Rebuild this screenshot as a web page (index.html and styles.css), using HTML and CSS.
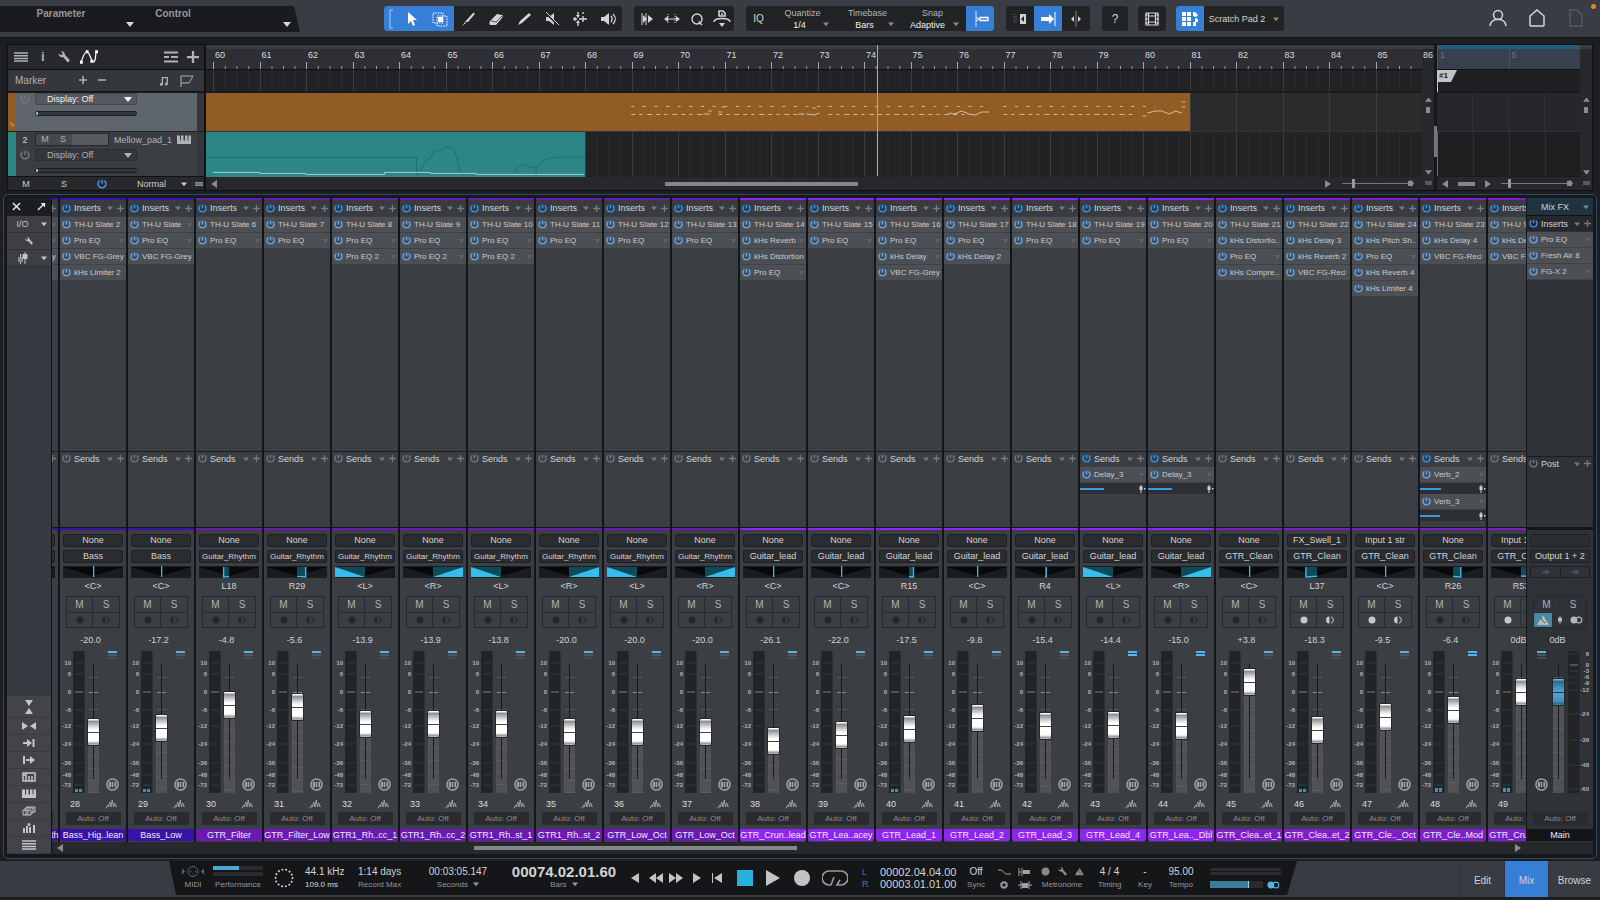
FILE: index.html
```html
<!DOCTYPE html>
<html lang="en">
<head>
    <meta charset="UTF-8">
    <title>Mixer</title>
    <link rel="stylesheet" href="styles.css">
</head>
<body>
    <!-- Icon set -->
    <svg class="sprite" aria-hidden="true">
        <symbol id="power" viewBox="0 0 10 10"><path d="M2.6 1.6a4 4 0 1 0 4.8 0M5 .8v4" fill="none" stroke="currentColor" stroke-width="1.5"/></symbol>
        <symbol id="down" viewBox="0 0 8 8"><path d="M0 2h8L4 7z" fill="currentColor"/></symbol>
        <symbol id="up" viewBox="0 0 8 8"><path d="M0 6h8L4 1z" fill="currentColor"/></symbol>
        <symbol id="left" viewBox="0 0 8 8"><path d="M7 0v8L1 4z" fill="currentColor"/></symbol>
        <symbol id="right" viewBox="0 0 8 8"><path d="M1 0v8l6-4z" fill="currentColor"/></symbol>
        <symbol id="plus" viewBox="0 0 8 8"><path d="M4 0v8M0 4h8" stroke="currentColor" stroke-width="1.5"/></symbol>
        <symbol id="minus" viewBox="0 0 8 8"><path d="M0 4h8" stroke="currentColor" stroke-width="1.5"/></symbol>
        <symbol id="lines" viewBox="0 0 14 10"><path d="M0 1h14M0 3.7h14M0 6.4h14M0 9.1h14" stroke="currentColor" stroke-width="1.5"/></symbol>
        <symbol id="wrench" viewBox="0 0 12 12"><path d="M.5 2.5 2.8 4l1.4-.3L4.5 2 3 .4c2-.7 4 .7 3.7 3L12 9.2 9.8 11.5 5 6C3 7 .5 5 .5 2.5z" fill="currentColor"/></symbol>
        <symbol id="bars" viewBox="0 0 14 6"><path d="M0 1h14M0 5h14" stroke="currentColor" stroke-width="2"/></symbol>
        <symbol id="keys" viewBox="0 0 14 9"><path d="M0 0v8.5h14V0h-2.5v5h-1V0H8v5H6.500V0H4v5H3V0z" fill="currentColor"/></symbol>
        <symbol id="plug" viewBox="0 0 14 14"><circle cx="7" cy="7" r="6" fill="none" stroke="currentColor" stroke-width="1.6"/><path d="M3 4h2.500v6H3zM6.200 4h1.600v6H6.200zM9 4h2v6H9z" fill="currentColor"/></symbol>
        <symbol id="wave" viewBox="0 0 12 10"><path d="M0 9h1l1-3 1 2 1.200-5 1.300 5 1.200-7 1.300 7 1.200-4L10.500 8l.7-1" fill="none" stroke="currentColor"/></symbol>
        <symbol id="rec" viewBox="0 0 8 8"><circle cx="4" cy="4" r="3.500" fill="currentColor"/></symbol>
        <symbol id="monitor" viewBox="0 0 8 8"><path d="M3.500.5a3.500 3.500 0 0 0 0 7z" fill="currentColor"/><path d="M5 .7a3.500 3.500 0 0 1 0 6.600" fill="none" stroke="currentColor"/></symbol>
        <symbol id="fader" viewBox="0 0 8 10"><path d="M4 0v10" stroke="currentColor"/><path d="M1.500 2h5v5h-5z" fill="currentColor"/></symbol>
        <symbol id="fader-pair" viewBox="0 0 12 12"><path d="M3.500 2v10M8 0v12" stroke="currentColor"/><path d="M1 5h5v5H1z" fill="#8a8b8e"/><path d="M5.500 2h5v5h-5z" fill="currentColor"/></symbol>
        <symbol id="send" viewBox="0 0 8 8"><path d="M3 0v8" stroke="currentColor"/><path d="M1.500 1.500h3v3.500h-3zM6 3h1.500v1.500H6z" fill="currentColor"/></symbol>
        <symbol id="link" viewBox="0 0 14 8"><circle cx="4.200" cy="4" r="3.700" fill="currentColor"/><circle cx="9.500" cy="4" r="3.200" fill="none" stroke="currentColor" stroke-width="1.300"/></symbol>
        <symbol id="metro" viewBox="0 0 12 10"><path d="M0 10 3 4l1 1 2-5 6 10z" fill="currentColor"/><path d="m3 3 5 5" stroke="#2b5b74"/></symbol>
        <symbol id="curve" viewBox="0 0 20 14"><path d="M2 12C4 10 4 3 8 2s4 11 8 10c2-2 1-6 2-10" fill="none" stroke="currentColor" stroke-width="1.300"/><path d="M1 11h3v3H1zM7 0h3v3H7zM12 10h3v3h-3zM17 0h3v3h-3z" fill="currentColor"/></symbol>
    </svg>

    <header class="topbar">
        <div class="params">
            <button>Parameter<svg><use href="#down"/></svg></button>
            <button>Control<svg><use href="#down"/></svg></button>
        </div>
        <div class="toolbar">
            <div class="group">
                <span class="bracket on"><svg viewBox="0 0 6 20"><path d="M5 1H2v18h3" fill="none" stroke="#a9cdf5"/></svg></span>
                <button class="on" aria-label="Arrow"><svg viewBox="0 0 18 18"><path d="M5 2v12l3-3 2 5 2-1-2-5h4z" fill="#fff"/></svg></button>
                <button class="on" aria-label="Range"><svg viewBox="0 0 18 18"><path d="M2 3h10v10H2zM6 6h10v10H6z" fill="none" stroke="#fff" stroke-dasharray="1.500 1"/><path d="M7 7h5v5H7z" fill="#fff"/></svg></button>
                <button aria-label="Split"><svg viewBox="0 0 18 18"><path d="M14 3c2-1 2 1 1 2L9 12l-3 0zM6 12l-3 4 4-3z" fill="currentColor"/></svg></button>
                <button aria-label="Eraser"><svg viewBox="0 0 18 18"><path d="m3 11 7-7 5 1c1 0 1 1 0 3l-6 7H4c-2 0-2-2-1-4z" fill="currentColor"/><path d="m4 11 5 1 6-6" fill="none" stroke="#555"/></svg></button>
                <button aria-label="Paint"><svg viewBox="0 0 18 18"><path d="m3 15 2-4 9-8 2 2-9 8z" fill="currentColor"/></svg></button>
                <button aria-label="Mute"><svg viewBox="0 0 18 18"><path d="M3 7h3l5-4v12l-5-4H3z" fill="currentColor"/><path d="m3 3 12 12" stroke="#222" stroke-width="2"/><path d="m3 2 13 13" stroke="currentColor"/></svg></button>
                <button aria-label="Bend"><svg viewBox="0 0 18 18"><path d="M7 2v5M7 11v5M2 9h4M8 9h8M4 7v4M12 6v6M12 4V2" stroke="currentColor" stroke-width="1.400"/><path d="m5 5 2 3 2-3zM5 13l2-3 2 3z" fill="currentColor"/></svg></button>
                <button aria-label="Listen"><svg viewBox="0 0 18 18"><path d="M2 7h3l5-4v12l-5-4H2z" fill="currentColor"/><path d="M12 6c1.500 2 1.500 4 0 6M14 4c3 3 3 7 0 10" fill="none" stroke="currentColor" stroke-width="1.300"/></svg></button>
            </div>
            <div class="group narrow">
                <button aria-label="Snap to start"><svg viewBox="0 0 18 18"><path d="M4 3v12M8 3v12" stroke="currentColor"/><path d="m5 5 4 4-4 4zM10 5l5 4-5 4z" fill="currentColor"/></svg></button>
                <button aria-label="Stretch"><svg viewBox="0 0 18 18"><path d="M5 4v10M12 4v10" stroke="currentColor" stroke-dasharray="1 1"/><path d="M3 9h12" stroke="currentColor"/><path d="M5 6 1 9l4 3zM13 6l4 3-4 3z" fill="currentColor"/></svg></button>
                <button aria-label="Quantize"><svg viewBox="0 0 18 18"><circle cx="9" cy="9" r="5" fill="none" stroke="currentColor" stroke-width="1.400"/><path d="m10.500 11.500 3.500 3.500" stroke="currentColor" stroke-width="1.400"/></svg></button>
                <button aria-label="Scroll"><svg viewBox="0 0 18 18"><path d="M6 1h4l2 2v3H6zM8 4h2M1 12c0-3 4-3.500 8-3.500s8 .5 8 3.500" fill="none" stroke="currentColor" stroke-width="1.600"/><path d="M6 13h6l-3 4z" fill="currentColor"/></svg></button>
            </div>
            <div class="group">
                <button class="iq">IQ</button>
                <button class="field">Quantize<b>1/4</b><svg><use href="#down"/></svg></button>
                <button class="field">Timebase<b>Bars</b><svg><use href="#down"/></svg></button>
                <button class="field">Snap<b>Adaptive</b><svg><use href="#down"/></svg></button>
                <button class="on" aria-label="Snap"><svg viewBox="0 0 18 18"><path d="M5 1v16" stroke="#d6e6fa"/><path d="M5 7l3 2-3 2" fill="none" stroke="#fff"/><path d="M9 7.500h8v3H9z" fill="none" stroke="#fff" stroke-width="1.300"/></svg></button>
            </div>
            <div class="group">
                <button aria-label="Follow editor"><svg viewBox="0 0 18 18"><path d="M3 4v10M5 4v10" stroke="#666" stroke-dasharray="1 1"/><path d="M9 4h6v10H9z" fill="currentColor"/><path d="M13 6v6l-3-3z" fill="#222"/></svg></button>
                <button class="on" aria-label="Autoscroll"><svg viewBox="0 0 18 18"><path d="M2 7h8V4l5 5-5 5v-3H2z" fill="#fff"/><path d="M16 2v14" stroke="#fff"/></svg></button>
                <button aria-label="Cursor"><svg viewBox="0 0 18 18"><path d="M9 1v16" stroke="#888"/><path d="M7 6v6L4 9zM11 6v6l3-3z" fill="currentColor"/></svg></button>
            </div>
            <div class="pair">
                <div class="group"><button class="help">?</button></div>
                <div class="group"><button aria-label="Video"><svg viewBox="0 0 18 18"><path d="M3 3h12v12H3zM5.500 3v12M12.500 3v12M6 6h6M6 12h6" fill="none" stroke="currentColor" stroke-width="1.200"/><path d="M2 5h3M2 9h3M2 13h3M13 5h3M13 9h3M13 13h3" stroke="currentColor"/></svg></button></div>
                <div class="group">
                    <button class="on" aria-label="Scratch pad"><svg viewBox="0 0 18 18"><path d="M1 2h4v4H1zM6 2h4v4H6zM1 7h4v4H1zM6 7h4v4H6zM1 12h4v4H1zM6 12h4v4H6zM12 2h2l3 3-2 2-3-1zM14 8l3 1v3l-3 0zM12 12h3v4h-3z" fill="#fff"/></svg></button>
                    <button class="pad">Scratch Pad 2<svg><use href="#down"/></svg></button>
                </div>
            </div>
        </div>
        <nav class="account">
            <button aria-label="Account"><svg viewBox="0 0 18 18"><circle cx="9" cy="6" r="4.500"/><path d="M1 17c1-9 15-9 16 0"/></svg></button>
            <button aria-label="Home"><svg viewBox="0 0 18 18"><path d="M2 7v9q0 1 1 1h12q1 0 1-1V7L9 1z"/></svg></button>
            <button aria-label="New" class="dim"><svg viewBox="0 0 18 18"><path d="M3 1h7l5 5v11H3z"/></svg></button>
        </nav>
        <i class="notice"></i>
    </header>

    <section class="arrange">
        <div class="tracks">
            <div class="tracks-tools">
                <svg class="w14"><use href="#lines"/></svg>
                <b class="info">i</b>
                <svg class="w12"><use href="#wrench"/></svg>
                <svg class="w18 lit"><use href="#curve"/></svg>
                <svg class="w14 push" viewBox="0 0 14 12"><path d="M0 1.500h14M0 6h5M7 6h7M0 10.500h14" stroke="currentColor" stroke-width="2"/></svg>
                <svg class="w12"><use href="#plus"/></svg>
            </div>
            <div class="marker">
                <span>Marker</span>
                <button aria-label="Add marker"><svg><use href="#plus"/></svg></button>
                <button aria-label="Remove marker"><svg><use href="#minus"/></svg></button>
                <svg class="w10 push" viewBox="0 0 12 12"><path d="M4 10V2h6v7" fill="none" stroke="currentColor" stroke-width="1.500"/><circle cx="2.800" cy="10" r="1.800" fill="currentColor"/><circle cx="8.800" cy="9.500" r="1.800" fill="currentColor"/></svg>
                <svg class="w14" viewBox="0 0 14 12"><path d="M1 12V1h12l-4 7H1" fill="none" stroke="currentColor"/></svg>
            </div>
            <div class="track first">
                <i class="chip orange">∿</i>
                <div class="track-body">
                    <div class="track-row"><svg class="w10"><use href="#power"/></svg><button class="display">Display: Off<svg><use href="#down"/></svg></button></div>
                    <input type="range" min="0" max="100" value="0" aria-label="Automation 1">
                </div>
            </div>
            <div class="track second">
                <i class="chip teal"></i>
                <div class="track-body">
                    <div class="track-row"><b>2</b><span class="ms"><button>M</button><button>S</button><i></i></span><span class="track-name">Mellow_pad_1</span><svg class="w14"><use href="#keys"/></svg></div>
                    <div class="track-row"><svg class="w10"><use href="#power"/></svg><button class="display">Display: Off<svg><use href="#down"/></svg></button></div>
                    <input type="range" min="0" max="100" value="0" aria-label="Automation 2">
                </div>
            </div>
            <div class="tracks-foot">
                <button>M</button><button>S</button><svg class="w10 blue"><use href="#power"/></svg>
                <button class="mode">Normal<svg><use href="#down"/></svg></button>
                <svg class="w8"><use href="#bars"/></svg>
            </div>
        </div>

        <div class="timeline">
            <div class="ruler" id="ruler"></div>
            <div class="lane marker-lane"><div class="grid"></div></div>
            <div class="lane lane-1">
                <div class="grid"></div>
                <div class="clip clip-orange">
                    <svg viewBox="0 0 983 38" preserveAspectRatio="none">
                        <path d="M425 13.500h352M797 13.500h152" stroke-dasharray="3 8.620"/>
                        <path d="M425 21.500h72M512 21.500h85M622 21.500h145M797 21.500h132" stroke-dasharray="4 4 3 5 5 4"/>
                        <path d="M497 21l7 0M502 18h4M512 19h4M515 14h4M592 21h6M606 15h4M600 21l8 1 5-2M742 20l6 1 7-3 8 3 6 1 6-3h8M936 23h4M941 20l8-2h6l8 3 6-3 6 2M975 9h4M975 14h4"/>
                    </svg>
                </div>
            </div>
            <div class="lane lane-2">
                <div class="grid"></div>
                <div class="clip clip-teal">
                    <svg viewBox="0 0 380 45" preserveAspectRatio="none">
                        <path d="M0 25.500h211v18M213 43l6-12 7-6 3-6 8-1 4-3 5 1 4 5 5 19 3 4M307 43c4-4 6-10 10-10h4c6 4 9 3 13 1 0-6 9-8 22-9h24M331 34v9" stroke="#216f6e" fill="none"/>
                        <path d="M7 40.500h47v1h46v1h79v-2h46v1h46v1h108" stroke="#a5cfcb" fill="none"/>
                    </svg>
                </div>
            </div>
            <div class="hscroll"><svg class="w8"><use href="#left"/></svg><i class="thumb"></i><svg class="w8 push"><use href="#right"/></svg><input class="zoom" type="range" value="14" aria-label="Zoom"></div>
            <i class="playhead"></i>
        </div>
        <div class="vscroll"><svg><use href="#up"/></svg><i></i><svg class="bottom"><use href="#down"/></svg><svg><use href="#bars"/></svg></div>
        <div class="splitter"></div>

        <div class="scratch">
            <div class="scratch-ruler"><span>1</span><span>5</span></div>
            <div class="scratch-marker"><b>#1</b></div>
            <div class="scratch-lane one"></div>
            <div class="scratch-lane two"></div>
            <div class="hscroll"><svg class="w8"><use href="#left"/></svg><i class="thumb"></i><svg class="w8"><use href="#right"/></svg><input class="zoom" type="range" value="10" aria-label="Scratch zoom"></div>
        </div>
        <div class="vscroll"><svg><use href="#up"/></svg><i></i><svg class="bottom"><use href="#down"/></svg><svg><use href="#bars"/></svg></div>
    </section>

    <section class="mixer">
        <aside class="side">
            <div class="side-head"><svg viewBox="0 0 10 10"><path d="m1 1 8 8M9 1 1 9" stroke="currentColor" stroke-width="1.500"/></svg><svg viewBox="0 0 10 10"><path d="m1 9 6-6" stroke="currentColor" stroke-width="1.500"/><path d="M4 1h5v5z" fill="currentColor"/></svg></div>
            <button class="row">I/O<svg><use href="#down"/></svg></button>
            <button class="row single" aria-label="Settings"><svg class="w8"><use href="#wrench"/></svg></button>
            <button class="row" aria-label="Channel type"><svg class="w12"><use href="#fader-pair"/></svg><svg><use href="#down"/></svg></button>
            <div class="side-tools">
                <button aria-label="Collapse"><svg viewBox="0 0 14 14"><path d="M3 0h8L7 6zM3 14h8L7 8z" fill="currentColor"/></svg></button>
                <button aria-label="Narrow"><svg viewBox="0 0 14 10"><path d="M0 1v8l6-4zM14 1v8L8 5z" fill="currentColor"/></svg></button>
                <button aria-label="Inputs"><svg viewBox="0 0 14 10"><path d="M1 5h7M11.500 1v8" stroke="currentColor" stroke-width="2"/><path d="M5 1v8l5-4z" fill="currentColor"/></svg></button>
                <button aria-label="Outputs"><svg viewBox="0 0 14 10"><path d="M2 1v8M4 5h6" stroke="currentColor" stroke-width="2"/><path d="M8 1v8l5-4z" fill="currentColor"/></svg></button>
                <button aria-label="External"><svg viewBox="0 0 14 10"><path d="M1 1h12v8H1zM4 1v8M1 3h3M7 4v5M10 4v5" fill="none" stroke="currentColor" stroke-width="1.500"/></svg></button>
                <button aria-label="Instruments"><svg><use href="#keys"/></svg></button>
                <button aria-label="Banks"><svg viewBox="0 0 14 10"><path d="M1 4h8v5H1zM3 4V2h8v5H9M5 2V1h8v5h-2M4 4v5M6 4v5" fill="none" stroke="currentColor"/></svg></button>
                <button aria-label="Groups"><svg viewBox="0 0 14 10"><path d="M1 5h2v5H1zM4 3h2v7H4zM7 4h2v6H7zM11 2h2v8h-2z" fill="currentColor"/><circle cx="7" cy="1.500" r="1.500" fill="currentColor"/></svg></button>
                <button aria-label="List"><svg><use href="#lines"/></svg></button>
            </div>
        </aside>
        <div class="console">
            <div class="strips"><div class="strips-inner" id="strips"></div></div>
            <div class="hscroll"><svg class="w8"><use href="#left"/></svg><i class="thumb"></i><svg class="w8 push"><use href="#right"/></svg></div>
        </div>
        <div class="main-out" id="main"></div>
    </section>

    <footer class="transport">
        <div class="display-panel">
            <div class="cell midi"><svg viewBox="0 0 22 12"><circle cx="11" cy="6" r="5" fill="none" stroke="currentColor"/><path d="M0 3v6l3-3zM22 3v6l-3-3zM8 5h1v2H8zM13 5h1v2h-1zM10.500 8h1v1h-1z" fill="currentColor"/></svg><small>MIDI</small></div>
            <div class="cell perf"><i class="meter-bar half"></i><i class="meter-bar"></i><small>Performance</small></div>
            <svg class="spinner" viewBox="0 0 20 20"><circle cx="10" cy="10" r="8.500" fill="none" stroke="currentColor" stroke-width="2" stroke-dasharray="0.100 3.710" stroke-linecap="round"/></svg>
            <div class="cell start rate"><span>44.1 kHz</span><small class="lit">109.0 ms</small></div>
            <div class="cell start recmax"><span>1:14 days</span><small>Record Max</small></div>
            <button class="cell secs"><span>00:03:05.147</span><small>Seconds <svg><use href="#down"/></svg></small></button>
            <button class="cell time"><strong>00074.02.01.60</strong><small>Bars <svg><use href="#down"/></svg></small></button>
            <div class="keys">
                <button aria-label="Previous"><svg viewBox="0 0 16 10"><path d="M12 0v10L4 5z" fill="currentColor"/></svg></button>
                <button aria-label="Rewind"><svg viewBox="0 0 16 10"><path d="M8 0v10L1 5zM15 0v10L8 5z" fill="currentColor"/></svg></button>
                <button aria-label="Forward"><svg viewBox="0 0 16 10"><path d="M1 0v10l7-5zM8 0v10l7-5z" fill="currentColor"/></svg></button>
                <button aria-label="Next"><svg viewBox="0 0 16 10"><path d="M4 0v10l8-5z" fill="currentColor"/></svg></button>
                <button aria-label="Return to zero"><svg viewBox="0 0 16 10"><path d="M13 0v10L5 5zM3 0h1v10H3z" fill="currentColor"/></svg></button>
            </div>
            <div class="keys big">
                <button aria-label="Stop" class="stop"></button>
                <button aria-label="Play"><svg viewBox="0 0 16 16"><path d="M1 0v16l14-8z" fill="currentColor"/></svg></button>
                <button aria-label="Record"><svg viewBox="0 0 16 16"><circle cx="8" cy="8" r="8" fill="currentColor"/></svg></button>
                <button aria-label="Loop" class="loop"><svg viewBox="0 0 26 16"><path d="M9 15H7A6 6 0 0 1 7 1h12a6 6 0 0 1 0 14h-4l3-5M9 15l3-8" fill="none" stroke="#999" stroke-width="1.700"/></svg></button>
            </div>
            <div class="locators"><b>L</b><span>00002.04.04.00</span><b>R</b><span>00003.01.01.00</span></div>
            <div class="cell sync"><span>Off</span><small>Sync</small></div>
            <svg class="modes" viewBox="0 0 36 24"><path d="M0 4h3l5 4h5M21 2v8M24 2v8M21 6h3" fill="none" stroke="currentColor"/><path d="M25 4h7v4h-7zM24 17h6v5h-6z" fill="currentColor"/><path d="M20 19h14M23 15v8M31 15v8" stroke="currentColor"/><circle cx="6" cy="19" r="2.500" fill="none" stroke="currentColor" stroke-width="1.500"/><circle cx="6" cy="19" r="3.700" fill="none" stroke="currentColor" stroke-width="1" stroke-dasharray="1.500 1.400"/></svg>
            <div class="cell metronome"><span class="icons"><svg><use href="#rec"/></svg><svg><use href="#wrench"/></svg><svg><use href="#metro"/></svg></span><small>Metronome</small></div>
            <div class="cell timing"><span>4 / 4</span><small>Timing</small></div>
            <div class="cell key"><span>-</span><small>Key</small></div>
            <div class="cell tempo"><span>95.00</span><small>Tempo</small></div>
            <div class="outs"><i class="out"></i><i class="out live"></i><svg><use href="#link"/></svg></div>
        </div>
        <nav class="views"><button>Edit</button><button class="on">Mix</button><button>Browse</button></nav>
    </footer>

    <script src="mixer.js"></script>
</body>
</html>
```
FILE: styles.css
```css
* {
    box-sizing: border-box;
}

body {
    margin: 0;
    height: 100vh;
    display: flex;
    flex-direction: column;
    overflow: hidden;
    padding-bottom: 3px;
    background: #1d1e21;
    color: #d2d3d5;
    font: 9px/12px "Liberation Sans", Arial, sans-serif;
}

button {
    padding: 0;
    border: 0;
    background: none;
    color: inherit;
    font: inherit;
}

svg {
    flex: none;
    width: 8px;
    height: 8px;
}

.sprite {
    position: absolute;
    width: 0;
    height: 0;
}

.w8 { width: 8px; }
.w10 { width: 10px; height: 10px; }
.w12 { width: 12px; height: 12px; }
.w14 { width: 14px; height: 12px; }
.w18 { width: 19px; height: 14px; }
.lit { color: #fff; }
.blue { color: #3d95e6; }
.push { margin-left: auto; }
.on { background: #357fd6; }

/* Top bar */
.topbar {
    position: relative;
    display: flex;
    flex: none;
    height: 38px;
    padding-top: 6px;
    background: #393c42;
    border-bottom: 1px solid #111214;
}

.params {
    display: flex;
    width: 300px;
    height: 26px;
    background: #191b1f;
    clip-path: polygon(0 0, 294px 0, 100% 100%, 0 100%);
    color: #96989c;
    font-weight: bold;
    font-size: 10px;
}

.params button {
    display: flex;
    flex-direction: column;
    align-items: center;
    width: 122px;
    padding-top: 2px;
}

.params button + button {
    width: 100px;
    margin-left: 1px;
}

.params button svg {
    align-self: flex-end;
    margin-right: -12px;
    color: #d8d8d8;
}

.params button + button svg {
    margin-right: -68px;
}

.toolbar {
    display: flex;
    gap: 12px;
    margin-left: 84px;
}

.pair {
    display: flex;
    gap: 10px;
}

.group {
    display: flex;
    height: 25px;
    overflow: hidden;
    border-radius: 3px;
    background: #222325;
}

.group button,
.bracket {
    display: flex;
    align-items: center;
    justify-content: center;
    width: 28px;
}

.bracket {
    width: 14px;
}

.bracket svg {
    width: 6px;
    height: 20px;
}

.group button svg {
    width: 18px;
    height: 18px;
}

.group .on {
    background: #357fd6;
}

.narrow button {
    width: 25px;
}

.group .iq {
    width: 25px;
    font-size: 10px;
}

.group .field {
    position: relative;
    flex-direction: column;
    width: 65px;
    padding-right: 2px;
    color: #b4b5b8;
}

.field b {
    padding-right: 6px;
    font-weight: normal;
    color: #f0f0f0;
}

.group .field svg {
    position: absolute;
    right: 7px;
    bottom: 4px;
    width: 6px;
    height: 6px;
    color: #888;
}

.field:nth-of-type(4) b {
    padding-right: 10px;
}

.group .help {
    width: 26px;
    font-size: 12px;
}

.group .pad {
    width: 80px;
    gap: 8px;
}

.group .pad svg {
    width: 6px;
    height: 6px;
    color: #888;
}

.account {
    display: flex;
    gap: 21px;
    margin: 2px 15px 0 auto;
}

.account button {
    height: 22px;
}

.account svg {
    width: 18px;
    height: 18px;
    fill: none;
    stroke: #d6d6d8;
    stroke-width: 1.5;
}

.account .dim svg {
    stroke: #55585d;
}

.notice {
    position: absolute;
    top: 4px;
    right: 4px;
    width: 5px;
    height: 5px;
    border-radius: 50%;
    background: #e08a1c;
}

/* Arrangement */
.arrange {
    display: flex;
    flex: none;
    height: 147px;
    margin: 6px 7px 3px;
    border: 1px solid #101113;
    background: #26282b;
}

.tracks {
    width: 198px;
    border-right: 2px solid #101113;
    color: #b0b2b5;
}

.tracks-tools,
.marker,
.track,
.track-row,
.tracks-foot,
.hscroll {
    display: flex;
    align-items: center;
}

.tracks-tools {
    gap: 13px;
    height: 25px;
    padding: 0 5px 0 6px;
    border-bottom: 1px solid #101113;
}

.tracks-tools .w18 {
    margin-left: -4px;
}

.tracks-tools .push {
    margin-right: -4px;
}

.info {
    font-size: 13px;
}

.marker {
    gap: 11px;
    height: 23px;
    padding: 0 10px 0 7px;
    border-bottom: 2px solid #17181a;
    background: #34373c;
    font-size: 10px;
}

.marker span {
    width: 53px;
}

.track {
    align-items: stretch;
    background: #3a3d42;
}

.track.first {
    height: 38px;
    background: #5f656d;
}

.track.second {
    height: 45px;
    border-top: 1px solid #222;
}

.chip {
    display: flex;
    align-items: flex-end;
    width: 8px;
    font-size: 8px;
}

.orange { background: #925c25; }
.teal { background: #2b8685; }

.track-body {
    flex: 1;
    border-right: 7px solid #34373c;
}

.track-row {
    gap: 5px;
    padding-left: 4px;
    height: 15px;
}

.first .track-row {
    height: 12px;
}

.track-row .w10 {
    color: #74777c;
}

.track-row b {
    width: 10px;
    text-align: center;
}

.display {
    display: flex;
    align-items: center;
    justify-content: space-between;
    width: 102px;
    height: 12px;
    padding: 0 4px 0 11px;
    border: 1px solid #2c2e32;
    border-radius: 2px;
    background: #34373b;
}

.first .display {
    background: #54595f;
    border-color: #44484d;
    color: #f0f0f0;
}

.ms {
    display: flex;
    width: 74px;
    height: 13px;
    border: 1px solid #26282b;
    line-height: 11px;
}

.ms button {
    width: 18px;
    background: #46494e;
}

.ms i {
    flex: 1;
    background: #585b60;
}

.track-name {
    width: 58px;
    white-space: nowrap;
}

.track-body input {
    display: block;
    appearance: none;
    width: 102px;
    height: 5px;
    margin: 6px 0 0 19px;
    border: 1px solid #1c1d1f;
    border-radius: 3px;
    background: #33363a;
}

.track-body input::-webkit-slider-thumb {
    appearance: none;
    width: 2px;
    height: 3px;
    background: #aaa;
}

.tracks-foot {
    height: 14px;
    padding-left: 13px;
    border-top: 1px solid #101113;
}

.tracks-foot button {
    width: 10px;
    margin-right: 28px;
    color: #ccc;
}

.tracks-foot .mode {
    display: flex;
    align-items: center;
    gap: 15px;
    width: auto;
    margin: 0 8px 0 30px;
}

.mode svg {
    width: 6px;
}

.timeline {
    position: relative;
    display: flex;
    flex-direction: column;
    flex: 1;
}

.ruler,
.grid {
    display: grid;
    grid-template-columns: repeat(26, 1fr);
    padding-left: 7px;
}

.ruler {
    height: 25px;
    border-top: 4px solid #3a3c41;
    border-bottom: 1px solid #101113;
    background: #2d2f34;
}

.bar {
    padding-left: 2px;
    color: #dcdcde;
    white-space: nowrap;
    background:
        linear-gradient(#aaa, #aaa) left bottom / 1px 7px no-repeat,
        linear-gradient(90deg, #999 1px, transparent 1px) left bottom / 25% 3px repeat-x;
}

.bar:last-child span {
    float: right;
    margin-right: -11px;
}

.lane {
    position: relative;
    display: grid;
    grid-template-columns: 7px repeat(26, 1fr);
}

.grid {
    grid-row: 1;
    grid-column: 1 / -1;
    background: #212224;
}

.grid i {
    background:
        linear-gradient(90deg, #3a3c3f 1px, transparent 1px) left top / 100% 100% no-repeat,
        linear-gradient(90deg, #2b2c2f 1px, transparent 1px) left top / 25% 100%;
}

.marker-lane {
    height: 23px;
    border-bottom: 2px solid #1a1b1d;
}

.lane-1 {
    height: 38px;
}

.lane-1 .grid {
    background: #2a2b2d;
}

.lane-2 {
    height: 45px;
    border-top: 1px solid #333;
}

.clip {
    grid-row: 1;
    min-width: 0;
}

.clip svg {
    display: block;
    width: 100%;
    height: 100%;
    fill: none;
}

.clip-orange {
    grid-column: 1 / 23;
    background: #925c25;
}

.clip-orange svg {
    stroke: #d0b896;
}

.clip-teal {
    grid-column: 1 / 10;
    background: #2b8685;
}

.hscroll {
    height: 14px;
    padding: 0 4px;
    border-top: 1px solid #1a1b1d;
    color: #8a8b8d;
}

.hscroll .thumb {
    flex: none;
    height: 4px;
    background: #858688;
}

.timeline .thumb {
    width: 16%;
    margin-left: 37%;
}

.zoom {
    appearance: none;
    flex: none;
    width: 72px;
    height: 9px;
    margin: 0 4px 0 10px;
    background:
        radial-gradient(circle, #8a8b8d 3px, transparent 3px) right / 7px 9px no-repeat,
        linear-gradient(#77787a, #77787a) center / 100% 1px no-repeat;
}

.zoom::-webkit-slider-thumb {
    appearance: none;
    width: 3px;
    height: 9px;
    background: #999;
}

.playhead {
    position: absolute;
    left: 55.2%;
    top: 0;
    bottom: 14px;
    width: 1px;
    background: #aaa;
}

.vscroll {
    display: flex;
    flex-direction: column;
    align-items: center;
    width: 12px;
    padding: 47px 0 3px;
    border-top: 4px solid #3a3c41;
    color: #8a8b8d;
}

.vscroll svg {
    width: 7px;
}

.vscroll i {
    width: 4px;
    height: 6px;
    margin-top: 3px;
    background: #8a8b8d;
}

.vscroll .bottom {
    margin: auto 0 3px;
}

.splitter {
    width: 3px;
    background: linear-gradient(#77787a, #77787a) center 81px / 3px 31px no-repeat #17181a;
}

.scratch {
    width: 143px;
}

.scratch-ruler {
    display: flex;
    height: 25px;
    border-top: 4px solid #255a7c;
    border-bottom: 1px solid #101113;
    background: #36404e;
    color: #6b7684;
}

.scratch-ruler span {
    width: 72px;
    padding-left: 2px;
    border-left: 1px solid #4b5460;
}

.scratch-marker {
    height: 23px;
    border-left: 1px solid #ccc;
    border-bottom: 2px solid #1a1b1d;
    background: #1f2022;
}

.scratch-marker b {
    display: block;
    width: 19px;
    height: 12px;
    padding-left: 1px;
    background: #c4c4c4;
    clip-path: polygon(0 0, 100% 0, 13px 100%, 0 100%);
    color: #222;
    font-size: 8px;
}

.scratch-lane {
    background: linear-gradient(90deg, transparent 35px, #303235 35px) left / 36px 100% #26272a;
}

.scratch-lane.one {
    height: 38px;
}

.scratch-lane.two {
    height: 45px;
    border-left: 1px solid #2b8685;
    border-top: 1px solid #303235;
    background-color: #1e1f21;
}

.scratch .hscroll {
    gap: 9px;
}

.scratch .thumb {
    width: 17px;
}

.scratch .zoom {
    margin: 0;
}

/* Mixer */
.mixer {
    display: flex;
    flex: 1;
    min-height: 0;
    margin: 0 3px 2px;
    padding: 3px 3px 4px;
    border: 1px solid #2c4a66;
    border-radius: 5px;
    background: #17181a;
}

.side {
    display: flex;
    flex-direction: column;
    flex: none;
    width: 45px;
    background: #373a40;
    border-right: 1px solid #101113;
    color: #c4c5c8;
}

.side-head {
    display: flex;
    justify-content: space-between;
    height: 18px;
    padding: 4px 5px;
    background: #1c1d20;
    color: #eee;
}

.side-head svg {
    width: 9px;
    height: 9px;
}

.side .row {
    display: flex;
    align-items: center;
    justify-content: center;
    gap: 12px;
    height: 17px;
    padding-left: 5px;
    background: #3d3f44;
    border-bottom: 1px solid #303237;
}

.side .row.single {
    padding-left: 0;
}

.side .row svg:last-child:not(.w8) {
    width: 6px;
}

.side-tools {
    margin-top: auto;
    background: #424449;
}

.side-tools button {
    display: flex;
    align-items: center;
    justify-content: center;
    width: 100%;
    height: 17px;
    border-bottom: 1px solid #383a3f;
}

.side-tools button:first-child {
    height: 22px;
}

.side-tools svg {
    width: 14px;
    height: 10px;
}

.side-tools button:first-child svg {
    height: 14px;
}

.console {
    display: flex;
    flex-direction: column;
    flex: 1;
    min-width: 0;
}

.strips {
    display: flex;
    flex: 1;
    overflow: hidden;
}

.strips-inner {
    display: flex;
    margin-left: -60px;
}

.console .hscroll {
    height: 12px;
    border-top: 0;
    background: #26282b;
}

.console .thumb {
    width: 22%;
    margin-left: 28%;
}

.strip {
    --color: #3a12a8;
    display: flex;
    flex-direction: column;
    flex: none;
    width: 68px;
    border-right: 2px solid #141518;
    background: #3b3e43;
}

.rhythm { --color: #6a1ab2; }
.lead { --color: #8e24f2; }
.clean { --color: #7e1ecb; }

.inserts {
    flex: 1;
    border-top: 2px solid var(--color);
}

.sends {
    height: 77px;
    border-top: 1px solid #1b1c1f;
}

.rack-head,
.slot {
    display: flex;
    align-items: center;
    height: 16px;
    padding: 0 2px;
}

.rack-head {
    margin-bottom: 1px;
    background: #383b40;
}

.rack-head button,
.slot button {
    display: flex;
}

.rack-head .title,
.slot .title {
    flex: 1;
    min-width: 0;
    margin-left: 3px;
    white-space: nowrap;
}

.rack-head svg,
.slot svg {
    width: 9px;
    height: 9px;
    color: #76797d;
}

.rack-head .arrow {
    width: 6px;
    height: 6px;
    margin-right: 4px;
}

.rack-head .add {
    width: 7px;
    height: 7px;
}

.rack-head .active svg {
    color: #2b98f5;
}

.sends .rack-head {
    height: 13px;
    margin-bottom: 2px;
    background: none;
}

.slot {
    border-bottom: 1px solid #3e4146;
    background: #4c5055;
    font-size: 8px;
    color: #c8cacd;
}

.slot button svg {
    color: #62a8f2;
}

.slot .arrow {
    width: 5px;
    height: 5px;
    color: #64676b;
}

.send-level {
    display: flex;
    align-items: center;
    justify-content: space-between;
    height: 11px;
    background: #2d2f33;
}

.send-level input {
    appearance: none;
    width: 56px;
    height: 2px;
    margin: 0;
    background: linear-gradient(90deg, #3a9be0 var(--level), transparent var(--level));
}

.send-level input::-webkit-slider-thumb {
    appearance: none;
    width: 1px;
    height: 2px;
}

.channel {
    display: flex;
    flex-direction: column;
    align-items: center;
    height: 314px;
    padding-top: 4px;
    border-top: 2px solid var(--color);
    box-shadow: 0 -1px #141518;
}

.route {
    flex: none;
    width: 60px;
    height: 13px;
    margin-bottom: 3px;
    border: 1px solid #1f2023;
    border-radius: 2px;
    background: #2a2c2f;
    line-height: 11px;
    text-align: center;
    white-space: nowrap;
}

.route.small {
    font-size: 8px;
}

.pan {
    position: relative;
    width: 60px;
    height: 12px;
}

.pan svg {
    display: block;
    width: 60px;
    height: 12px;
}

.pan input {
    position: absolute;
    inset: 0;
    width: 100%;
    margin: 0;
    opacity: 0;
}

.pan-value {
    height: 18px;
    line-height: 17px;
}

.buttons {
    display: grid;
    grid-template-columns: 26px 26px;
    grid-template-rows: 15px 15px;
    border: 1px solid #26282c;
    font-size: 10px;
    width: 54px;
    height: 32px;
}

.buttons button {
    display: flex;
    align-items: center;
    justify-content: center;
    border: 0 solid #2b2d31;
    color: #b2b3b5;
}

.buttons button:nth-child(odd) {
    border-right-width: 1px;
}

.buttons button:nth-child(n+3) {
    border-top-width: 1px;
    color: #26282c;
}

.buttons.armed button:nth-child(n+3) {
    color: #c8c8c8;
}

.level {
    height: 23px;
    line-height: 24px;
    margin-right: 5px;
}

.fader-zone {
    display: flex;
    width: 66px;
    height: 142px;
}

.scale {
    width: 25px;
    height: 142px;
    margin-right: 2px;
    overflow: visible;
    fill: #b4b5b7;
    font-size: 6px;
    font-weight: bold;
}

.fader {
    width: 13px;
    height: 142px;
    margin: 0;
    appearance: none;
    writing-mode: vertical-lr;
    direction: rtl;
    background:
        linear-gradient(#191a1c, #191a1c) center 13px / 1px 115px no-repeat,
        linear-gradient(#8c8d8f, #8c8d8f) center 41px / 9px 1px no-repeat,
        linear-gradient(#56595d, #56595d) center 26px / 9px 1px no-repeat,
        linear-gradient(#56595d, #56595d) center 58px / 9px 1px no-repeat,
        repeating-linear-gradient(#5c5e61 0 1px, #505256 1px 12px) center bottom / 11px var(--below) no-repeat;
}

.fader::-webkit-slider-thumb {
    appearance: none;
    width: 13px;
    height: 28px;
    border: 1px solid #26272a;
    border-radius: 2px;
    background: linear-gradient(#fff 0 1px, #888 2px, #ddd 8px, #fff 11px, #fff 13px, #444 13px 14px, #fff 14px, #fff 22px, #888 25px, #ddd);
}

.extras {
    display: flex;
    flex-direction: column;
    align-items: center;
    justify-content: space-between;
    width: 14px;
    margin-left: 5px;
    color: #a0a1a3;
}

.extras > svg {
    width: 13px;
    height: 13px;
    margin-bottom: 2px;
}

.leds {
    width: 9px;
    height: 9px;
    background: linear-gradient(#58b4ee 0 2px, transparent 2px 3px, #57534f 3px 5px, transparent 5px 6px, #4c4a48 6px 8px, transparent 8px);
}

.leds.hot {
    background: linear-gradient(#58b4ee 0 2px, transparent 2px 3px, #58b4ee 3px 5px, transparent 5px);
}

.number {
    display: flex;
    align-items: center;
    justify-content: space-between;
    width: 48px;
    height: 19px;
    padding-top: 2px;
    margin-left: 2px;
    color: #dcdcde;
}

.number svg {
    width: 13px;
    height: 10px;
    color: #a0a1a3;
}

.auto {
    width: 55px;
    height: 13px;
    background: #292b2e;
    color: #8b8c8e;
    font-size: 8px;
}

.name {
    width: 100%;
    height: 12px;
    margin-top: 4px;
    border-radius: 0 0 3px 3px;
    background: var(--color);
    color: #f0e8ff;
    line-height: 12px;
    text-align: center;
    white-space: nowrap;
}

/* Main output */
.main-out {
    display: flex;
    width: 67px;
    padding-bottom: 12px;
    background: #26282b;
}

.main-out .strip {
    --color: #141518;
    width: 67px;
    border-left: 1px solid #141518;
    border-right: 0;
    background: #2f3237;
}

.main-out .inserts {
    border-top: 0;
}

.inserts .mixfx + .rack-head {
    height: 15px;
    background: #26282c;
}

.mixfx {
    display: flex;
    align-items: center;
    justify-content: space-between;
    width: 100%;
    height: 18px;
    padding: 0 4px 0 14px;
    border-bottom: 1px solid #101113;
    background: #1f3440;
}

.mixfx svg {
    width: 6px;
    color: #7c8a92;
}

.main-out .sends {
    height: 72px;
}

.peaks {
    display: grid;
    grid-template-columns: 1fr 1fr;
    width: 60px;
    height: 12px;
    border: 1px solid #1f2023;
    color: #4d93c0;
    font-size: 7px;
    line-height: 10px;
    text-align: center;
}

.peaks span + span {
    border-left: 1px solid #1f2023;
}

.main-out .buttons {
    grid-template-columns: 19px 7px 7px 19px;
}

.main-out .buttons button {
    grid-column: span 2;
}

.main-out .buttons button:nth-child(n+3) {
    color: #b8b8b8;
}

.main-out .buttons button:nth-child(3),
.main-out .buttons button:nth-child(5) {
    grid-column: span 1;
}

.main-out .buttons .metro {
    background: #4a86a6;
    color: #fff;
}

.main-out .buttons .metro svg {
    width: 12px;
    height: 10px;
}

.main-out .buttons [aria-label="Link"] svg {
    width: 13px;
}

.main-out .extras {
    margin: 0 4px 0 8px;
}

.main-out .scale {
    margin: 0 0 0 3px;
}

.main-out .fader::-webkit-slider-thumb {
    background: linear-gradient(#6cb4dc 0 1px, #2f6687 2px, #4292c2 9px, #4fa3d2 13px, #1c3a4c 13px 14px, #4fa3d2 14px, #4292c2 22px, #2f6687 25px, #4292c2);
}

.main-out .name {
    border-radius: 0;
}

/* Transport */
.transport {
    display: flex;
    flex: none;
    height: 36px;
    padding-left: 169px;
    background: #383b41;
}

.display-panel {
    position: relative;
    display: flex;
    align-items: center;
    width: 1128px;
    height: 34px;
    background: #151618;
    clip-path: polygon(0 0, 100% 0, 1118px 100%, 7px 100%);
}

.cell {
    display: flex;
    flex-direction: column;
    align-items: center;
    flex: none;
    font-size: 10px;
    line-height: 13px;
}

.cell small {
    font-size: 8px;
    color: #96979a;
}

.cell small svg {
    width: 6px;
    height: 6px;
    margin-left: 3px;
}

.cell small.lit {
    color: #dcdcde;
}

.start {
    align-items: flex-start;
}

.midi { width: 48px; color: #5a6b76; }
.midi svg { width: 22px; height: 13px; }

.perf { width: 50px; margin: 0 11px 0 -4px; }

.meter-bar {
    width: 50px;
    height: 4px;
    margin-bottom: 2px;
    background: #292b2f;
}

.meter-bar.half {
    background: linear-gradient(90deg, #4ea7d4 52%, #292b2f 52%);
}

.spinner {
    width: 20px;
    height: 20px;
}

.rate { width: 53px; margin-left: 11px; }
.recmax { width: 56px; }
.secs { width: 88px; }
.time { width: 124px; }
.time strong { font-size: 15px; }

.keys {
    display: flex;
    justify-content: space-between;
    width: 98px;
    margin-left: 1px;
}

.keys button {
    display: flex;
    align-items: center;
    justify-content: center;
    width: 16px;
    height: 18px;
    color: #c4c4c4;
}

.keys svg {
    width: 16px;
    height: 10px;
}

.keys.big {
    align-items: center;
    width: 111px;
    margin-left: 12px;
}

.keys.big svg {
    width: 16px;
    height: 16px;
}

.keys .stop {
    height: 16px;
    background: #2ab0dc;
}

.keys.big .loop,
.keys.big .loop svg {
    width: 26px;
}

.locators {
    display: grid;
    grid-template-columns: 18px 78px;
    margin-left: 14px;
    font-size: 11px;
    line-height: 12px;
}

.locators b {
    color: #3a7ca8;
    font-size: 9px;
    font-weight: normal;
}

.sync { width: 32px; margin-left: 2px; }

.modes {
    width: 36px;
    height: 24px;
    margin-left: 6px;
    color: #a0a0a0;
}

.metronome { width: 50px; margin-left: 3px; }

.icons {
    display: flex;
    align-items: center;
    gap: 8px;
    height: 13px;
    color: #888;
}

.icons svg {
    width: 9px;
    height: 9px;
}

.timing { width: 45px; }
.key { width: 26px; }
.tempo { width: 46px; }

.outs {
    display: grid;
    grid-template-columns: 53px 14px;
    gap: 6px 4px;
    align-items: center;
    margin-left: 6px;
}

.out {
    grid-column: 1 / -1;
    height: 7px;
    background: linear-gradient(#2a2c30 0 3px, #151618 3px 4px, #2a2c30 4px);
}

.out.live {
    grid-column: 1;
    background: linear-gradient(90deg, #3b7c9c 38px, #9fd3ee 38px 39px, #2a2c30 39px);
}

.outs svg {
    width: 13px;
    color: #4eb8e4;
}

.views {
    display: flex;
    margin-left: auto;
}

.views button {
    width: 44px;
    padding-top: 3px;
    border-left: 1px solid #303237;
    font-size: 10px;
}

.views button:last-child {
    width: 52px;
}
```
FILE: mixer.js
```js
const icon = (id, cls = '') => `<svg class="${cls}"><use href="#${id}"/></svg>`;

// group, number, name, inserts, input, bus, pan, level, fader height, options
const channels = [
    ['bass', 27, 'Bass_Hig..Synth', ['TH-U Slate', 'Pro EQ', 'VBC FG-Grey', 'kHs Limiter'], 'None', 'Bass', '<C>', '-20.0', 47],
    ['bass', 28, 'Bass_Hig..lean', ['TH-U Slate 2', 'Pro EQ', 'VBC FG-Grey', 'kHs Limiter 2'], 'None', 'Bass', '<C>', '-20.0', 47, { meter: 3 }],
    ['bass', 29, 'Bass_Low', ['TH-U Slate', 'Pro EQ', 'VBC FG-Grey'], 'None', 'Bass', '<C>', '-17.2', 51, { meter: 3 }],
    ['rhythm', 30, 'GTR_Filter', ['TH-U Slate 6', 'Pro EQ'], 'None', 'Guitar_Rhythm', 'L18', '-4.8', 74],
    ['rhythm', 31, 'GTR_Filter_Low', ['TH-U Slate 7', 'Pro EQ'], 'None', 'Guitar_Rhythm', 'R29', '-5.6', 72],
    ['rhythm', 32, 'GTR1_Rh..cc_1', ['TH-U Slate 8', 'Pro EQ', 'Pro EQ 2'], 'None', 'Guitar_Rhythm', '<L>', '-13.9', 55],
    ['rhythm', 33, 'GTR1_Rh..cc_2', ['TH-U Slate 9', 'Pro EQ', 'Pro EQ 2'], 'None', 'Guitar_Rhythm', '<R>', '-13.9', 55],
    ['rhythm', 34, 'GTR1_Rh..st_1', ['TH-U Slate 10', 'Pro EQ', 'Pro EQ 2'], 'None', 'Guitar_Rhythm', '<L>', '-13.8', 55],
    ['rhythm', 35, 'GTR1_Rh..st_2', ['TH-U Slate 11', 'Pro EQ'], 'None', 'Guitar_Rhythm', '<R>', '-20.0', 47],
    ['rhythm', 36, 'GTR_Low_Oct', ['TH-U Slate 12', 'Pro EQ'], 'None', 'Guitar_Rhythm', '<L>', '-20.0', 47],
    ['rhythm', 37, 'GTR_Low_Oct', ['TH-U Slate 13', 'Pro EQ'], 'None', 'Guitar_Rhythm', '<R>', '-20.0', 47],
    ['lead', 38, 'GTR_Crun..lead', ['TH-U Slate 14', 'kHs Reverb', 'kHs Distortion', 'Pro EQ'], 'None', 'Guitar_lead', '<C>', '-26.1', 38],
    ['lead', 39, 'GTR_Lea..acey', ['TH-U Slate 15', 'Pro EQ'], 'None', 'Guitar_lead', '<C>', '-22.0', 44],
    ['lead', 40, 'GTR_Lead_1', ['TH-U Slate 16', 'Pro EQ', 'kHs Delay', 'VBC FG-Grey'], 'None', 'Guitar_lead', 'R15', '-17.5', 50, { meter: 3 }],
    ['lead', 41, 'GTR_Lead_2', ['TH-U Slate 17', 'Pro EQ', 'kHs Delay 2'], 'None', 'Guitar_lead', '<C>', '-9.8', 61],
    ['lead', 42, 'GTR_Lead_3', ['TH-U Slate 18', 'Pro EQ'], 'None', 'Guitar_lead', 'R4', '-15.4', 53],
    ['lead', 43, 'GTR_Lead_4', ['TH-U Slate 19', 'Pro EQ'], 'None', 'Guitar_lead', '<L>', '-14.4', 54, { hot: 1, sends: [['Delay_3', 42]] }],
    ['lead', 44, 'GTR_Lea.._Dbl', ['TH-U Slate 20', 'Pro EQ'], 'None', 'Guitar_lead', '<R>', '-15.0', 53, { hot: 1, sends: [['Delay_3', 42]] }],
    ['clean', 45, 'GTR_Clea..et_1', ['TH-U Slate 21', 'kHs Distortio..', 'Pro EQ', 'kHs Compre..'], 'None', 'GTR_Clean', '<C>', '+3.8', 97],
    ['clean', 46, 'GTR_Clea..et_2', ['TH-U Slate 22', 'kHs Delay 3', 'kHs Reverb 2', 'VBC FG-Red'], 'FX_Swell_1', 'GTR_Clean', 'L37', '-18.3', 49, { armed: 1, meter: 3 }],
    ['clean', 47, 'GTR_Cle.._Oct', ['TH-U Slate 24', 'kHs Pitch Sh..', 'Pro EQ', 'kHs Reverb 4', 'kHs Limiter 4'], 'Input 1 str', 'GTR_Clean', '<C>', '-9.5', 62, { armed: 1 }],
    ['clean', 48, 'GTR_Cle..Mod', ['TH-U Slate 23', 'kHs Delay 4', 'VBC FG-Red'], 'None', 'GTR_Clean', 'R26', '-6.4', 69, { hot: 1, meter: 4, sends: [['Verb_2', 38], ['Verb_3', 36]] }],
    ['clean', 49, 'GTR_Crun..ean', ['TH-U Slate 25', 'kHs Delay 5', 'VBC FG-Red'], 'Input 1 str', 'GTR_Clean', 'R53', '0dB', 87, { armed: 1, meter: 4 }]
];

const head = (title, active) => `<div class="rack-head"><button class="${active ? 'active' : ''}" aria-label="${title} on">${icon('power')}</button>
    <span class="title">${title}</span>${icon('down', 'arrow')}${icon('plus', 'add')}</div>`;

// Long names take the room of the menu arrow
const slot = name => `<div class="slot"><button aria-label="${name} on">${icon('power')}</button><span class="title">${name}</span>${name.length < 11 ? icon('down', 'arrow') : ''}</div>`;

const send = ([name, level]) => slot(name) +
    `<div class="send-level"><input type="range" value="${level}" style="--level:${level}%" aria-label="${name} level">${icon('send')}</div>`;

function pan(value) {
    const text = value.replace('<', '&lt;').replace('>', '&gt;');
    let shape = '<path d="M30 0h1.300v11H30z" fill="#36bdea"/>';
    let amount = 0;
    if (value === '<L>') {
        amount = -100;
        shape = '<path d="M0 1h30v10H0z" fill="#0e4a5a"/><path d="M0 1v10h30z" fill="#36bdea"/>';
    } else if (value === '<R>') {
        amount = 100;
        shape = '<path d="M30 1h30v10H30z" fill="#0e4a5a"/><path d="M60 1v10H30z" fill="#36bdea"/>';
    } else if (value !== '<C>') {
        amount = Number(value.slice(1)) * (value[0] === 'L' ? -1 : 1);
        const x = 30 + amount * 0.3;
        shape = `<path d="M30 1H${x}v10H30z" fill="#0e4a5a"/><path d="M${x} 1v10L30 ${11 - Math.abs(amount) / 50}" fill="none" stroke="#36bdea" stroke-width="1.400"/>`;
    }
    return `<div class="pan"><svg viewBox="0 0 60 12"><path d="M0 0h60v12H0z" fill="#1b1c1e"/><path d="M0 1h60L30 10z" fill="#08090a"/>${shape}</svg>
        <input type="range" min="-100" max="100" value="${amount}" aria-label="Pan"></div><div class="pan-value">${text}</div>`;
}

const marks = [[10, 12], [6, 23], [0, 41], [-6, 59], [-12, 75], [-24, 93], [-36, 112], [-48, 124], [-72, 134]];
const mainMarks = [[6, 3], [0, 14], [-3, 20], [-6, 26], [-9, 32], [-12, 39], [-24, 63], [-36, 89], [-48, 114], [-60, 138]];

function scale(list, meterX, textX, level) {
    const rows = list.map(([db, y]) => `<path d="M${meterX + 2} ${y}h8" stroke="${db === 0 ? '#7d7e80' : '#1e4459'}"/>
        <text x="${textX}" y="${y + 2}" text-anchor="end">${db}</text>`).join('');
    const lit = level ? `<path d="M${meterX + 2} ${141 - level}h3v${level}h-3zM${meterX + 6} ${141 - level}h3v${level}h-3z" fill="#3f8fc0"/>` : '';
    return `<svg class="scale" viewBox="0 0 25 142"><rect x="${meterX}" width="11.500" height="142" rx="1" fill="#222426"/>${rows}${lit}</svg>`;
}

const fader = (value, name) => `<input class="fader" type="range" min="0" max="114" value="${value}" style="--below:${value + 14}px" aria-label="${name} volume">`;

function strip([group, number, name, inserts, input, bus, panValue, level, value, opt = {}]) {
    return `<article class="strip ${group}">
        <div class="inserts">${head('Inserts', true)}${inserts.map(slot).join('')}</div>
        <div class="sends">${head('Sends', opt.sends)}${(opt.sends || []).map(send).join('')}</div>
        <div class="channel">
            <button class="route">${input}</button>
            <button class="route ${bus.length > 12 ? 'small' : ''}">${bus}</button>
            ${pan(panValue)}
            <div class="buttons ${opt.armed ? 'armed' : ''}"><button>M</button><button>S</button><button aria-label="Record">${icon('rec')}</button><button aria-label="Monitor">${icon('monitor')}</button></div>
            <div class="level">${level}</div>
            <div class="fader-zone">${scale(marks, 13, 11, opt.meter)}${fader(value, name)}
                <div class="extras"><i class="leds ${opt.hot ? 'hot' : ''}"></i>${icon('plug')}</div></div>
            <div class="number">${number}${icon('wave')}</div>
            <button class="auto">Auto: Off</button>
            <div class="name">${name}</div>
        </div>
    </article>`;
}

document.getElementById('strips').innerHTML = channels.map(strip).join('');

document.getElementById('main').innerHTML = `<article class="strip">
    <div class="inserts"><button class="mixfx">Mix FX${icon('down')}</button>${head('Inserts', true)}${['Pro EQ', 'Fresh Air 8', 'FG-X 2'].map(slot).join('')}</div>
    <div class="sends">${head('Post')}</div>
    <div class="channel">
        <button class="route" aria-label="No input"></button>
        <button class="route">Output 1 + 2</button>
        <div class="peaks"><span>-∞</span><span>-∞</span></div>
        <div class="pan-value"></div>
        <div class="buttons"><button>M</button><button>S</button><button class="metro" aria-label="Metronome">${icon('metro')}</button><button aria-label="Fader">${icon('fader')}</button><button aria-label="Link">${icon('link')}</button></div>
        <div class="level">0dB</div>
        <div class="fader-zone"><div class="extras"><i class="leds"></i>${icon('plug')}</div>${fader(87, 'Main')}${scale(mainMarks, 0, 21)}</div>
        <div class="number"></div>
        <button class="auto">Auto: Off</button>
        <div class="name">Main</div>
    </div>
</article>`;

// Ruler bars 60 to 85, with the last bar number closing the range
let bars = '';
for (let n = 60; n < 86; n++) {
    bars += `<div class="bar">${n}${n === 85 ? '<span>86</span>' : ''}</div>`;
}
document.getElementById('ruler').innerHTML = bars;
document.querySelectorAll('.grid').forEach(grid => {
    grid.innerHTML = '<i></i>'.repeat(26);
});
```
